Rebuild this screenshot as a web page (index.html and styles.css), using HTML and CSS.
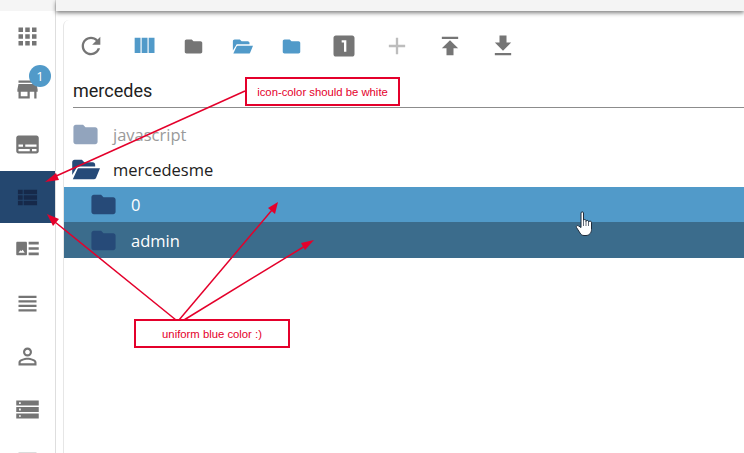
FILE: index.html
```html
<!DOCTYPE html>
<html lang="en">
<head>
    <meta charset="UTF-8">
    <meta name="viewport" content="width=device-width, initial-scale=1.0">
    <title>File browser</title>
    <link rel="stylesheet" href="styles.css">
</head>
<body>
    <svg class="icon-defs" width="0" height="0">
        <symbol id="i-apps" viewBox="0 0 24 24"><path d="M4 8h4V4H4v4zm6 12h4v-4h-4v4zm-6 0h4v-4H4v4zm0-6h4v-4H4v4zm6 0h4v-4h-4v4zm6-10v4h4V4h-4zm-6 4h4V4h-4v4zm6 6h4v-4h-4v4zm0 6h4v-4h-4v4z"/></symbol>
        <symbol id="i-store" viewBox="0 0 24 24"><path d="M20 4H4v2h16V4zm1 10v-2l-1-5H4l-1 5v2h1v6h10v-6h4v6h2v-6h1zm-9 4H6v-4h6v4z"/></symbol>
        <symbol id="i-subtitles" viewBox="0 0 24 24"><path d="M20 4H4c-1.100 0-2 .9-2 2v12c0 1.100.9 2 2 2h16c1.100 0 2-.9 2-2V6c0-1.100-.9-2-2-2zM4 12h4v2H4v-2zm10 6H4v-2h10v2zm6 0h-4v-2h4v2zm0-4H10v-2h10v2z"/></symbol>
        <symbol id="i-table" viewBox="0 0 24 24"><path d="M2 4h5v4.600H2zM8 4h14v4.600H8zM2 9.700h5v4.600H2zM8 9.700h14v4.600H8zM2 15.400h5V20H2zM8 15.400h14V20H8z"/></symbol>
        <symbol id="i-imagelist" viewBox="0 0 24 24"><path fill-rule="evenodd" d="M3 6h7.500c.6 0 1 .4 1 1v10c0 .6-.4 1-1 1H3c-.6 0-1-.4-1-1V7c0-.6.4-1 1-1zm1 9.800h5.500l-1.800-2.800-1.200 1.500-.9-1z"/><path d="M13 6h9v2.400h-9zM13 10.800h9v2.400h-9zM13 15.600h9V18h-9z"/></symbol>
        <symbol id="i-headline" viewBox="0 0 24 24"><path d="M4 15h16v-2H4v2zm0 4h16v-2H4v2zm0-8h16V9H4v2zm0-6v2h16V5H4z"/></symbol>
        <symbol id="i-person" viewBox="0 0 24 24"><path d="M12 5.900c1.160 0 2.100.94 2.100 2.100s-.94 2.100-2.100 2.100S9.900 9.160 9.900 8s.94-2.100 2.100-2.100m0 9c2.970 0 6.100 1.460 6.100 2.100v1.100H5.900V17c0-.64 3.130-2.100 6.100-2.100M12 4C9.790 4 8 5.790 8 8s1.790 4 4 4 4-1.790 4-4-1.790-4-4-4zm0 9c-2.670 0-8 1.340-8 4v3h16v-3c0-2.660-5.330-4-8-4z"/></symbol>
        <symbol id="i-rows" viewBox="0 0 24 24"><path fill-rule="evenodd" d="M2 4h20v4.500H2zm2.500 1.500v1.500H6V5.500zM2 9.800h20v4.400H2zm2.500 1.400v1.600H6v-1.600zM2 15.500h20V20H2zm2.500 1.500v1.500H6V17z"/></symbol>
        <symbol id="i-refresh" viewBox="0 0 24 24"><path d="M17.650 6.350C16.200 4.900 14.210 4 12 4c-4.420 0-7.990 3.580-7.990 8s3.570 8 7.990 8c3.730 0 6.840-2.550 7.730-6h-2.080c-.82 2.330-3.040 4-5.650 4-3.310 0-6-2.690-6-6s2.690-6 6-6c1.660 0 3.140.69 4.220 1.780L13 11h7V4l-2.350 2.350z"/></symbol>
        <symbol id="i-columns" viewBox="0 0 24 24"><path d="M10 18h5V5h-5v13zm-6 0h5V5H4v13zM16 5v13h5V5h-5z"/></symbol>
        <symbol id="i-folder" viewBox="0 0 24 24"><path d="M10 4H4c-1.100 0-1.990.9-1.990 2L2 18c0 1.100.9 2 2 2h16c1.100 0 2-.9 2-2V8c0-1.100-.9-2-2-2h-8l-2-2z"/></symbol>
        <symbol id="i-folder-open" viewBox="0 0 24 24"><path d="M1 16.500V6c0-1.100.9-2 2-2h6l2 2h7c1.100 0 2 .9 2 2v1.500H6.500c-1 0-1.800.6-2.100 1.500L1 16.500zM6.500 11H24l-3.300 8c-.3.6-.8 1-1.500 1H1.500l3.700-8c.3-.6.700-1 1.300-1z"/></symbol>
        <symbol id="i-one" viewBox="0 0 24 24"><path d="M19 3H5c-1.100 0-2 .9-2 2v14c0 1.100.9 2 2 2h14c1.100 0 2-.9 2-2V5c0-1.100-.9-2-2-2zm-5 14h-2V9h-2V7h4v10z"/></symbol>
        <symbol id="i-add" viewBox="0 0 24 24"><path d="M19 13h-6v6h-2v-6H5v-2h6V5h2v6h6v2z"/></symbol>
        <symbol id="i-upload" viewBox="0 0 24 24"><path d="M5 4v2h14V4H5zm0 10h4v6h6v-6h4l-7-7-7 7z"/></symbol>
        <symbol id="i-download" viewBox="0 0 24 24"><path d="M19 9h-4V3H9v6H5l7 7 7-7zM5 18v2h14v-2H5z"/></symbol>
    </svg>

    <div class="layout">
        <aside class="sidebar">
            <div class="side-top"></div>
            <a class="side-item side-first"><svg class="side-icon"><use href="#i-apps"/></svg></a>
            <a class="side-item side-up">
                <svg class="side-icon"><use href="#i-store"/></svg>
                <span class="badge">1</span>
            </a>
            <a class="side-item"><svg class="side-icon"><use href="#i-subtitles"/></svg></a>
            <a class="side-item active"><svg class="side-icon"><use href="#i-table"/></svg></a>
            <a class="side-item side-up"><svg class="side-icon"><use href="#i-imagelist"/></svg></a>
            <a class="side-item"><svg class="side-icon"><use href="#i-headline"/></svg></a>
            <a class="side-item"><svg class="side-icon"><use href="#i-person"/></svg></a>
            <a class="side-item"><svg class="side-icon"><use href="#i-rows"/></svg></a>
            <a class="side-item side-up"><svg class="side-icon"><use href="#i-headline"/></svg></a>
        </aside>

        <div class="page">
            <header class="topbar"></header>
            <main class="panel">
                <div class="toolbar">
                    <svg class="tool"><use href="#i-refresh"/></svg>
                    <svg class="tool tool-blue"><use href="#i-columns"/></svg>
                    <div class="tool-folders">
                        <svg class="tool-folder"><use href="#i-folder"/></svg>
                        <svg class="tool-folder tool-blue"><use href="#i-folder-open"/></svg>
                        <svg class="tool-folder tool-blue"><use href="#i-folder"/></svg>
                    </div>
                    <svg class="tool"><use href="#i-one"/></svg>
                    <svg class="tool tool-off"><use href="#i-add"/></svg>
                    <svg class="tool"><use href="#i-upload"/></svg>
                    <svg class="tool"><use href="#i-download"/></svg>
                </div>

                <h2 class="path-title">mercedes</h2>

                <ul class="tree">
                    <li class="tree-row faded">
                        <svg class="tree-icon"><use href="#i-folder"/></svg>javascript
                    </li>
                    <li class="tree-row">
                        <svg class="tree-icon"><use href="#i-folder-open"/></svg>mercedesme
                    </li>
                    <li class="tree-row child hover">
                        <svg class="tree-icon"><use href="#i-folder"/></svg>0
                    </li>
                    <li class="tree-row child selected">
                        <svg class="tree-icon"><use href="#i-folder"/></svg>admin
                    </li>
                </ul>
            </main>
        </div>
    </div>

    <!-- annotations drawn on top of the screenshot -->
    <svg class="arrows" width="744" height="453">
        <g class="arrow-lines">
            <line x1="245" y1="91" x2="54" y2="177"/>
            <line x1="176" y1="320" x2="55" y2="222"/>
            <line x1="179" y1="320" x2="272" y2="210"/>
            <line x1="184" y1="320" x2="305" y2="246"/>
        </g>
        <g class="arrow-heads">
            <polygon points="45,182 56,173 59,180"/>
            <polygon points="47,214 59,219 53,226"/>
            <polygon points="278,202 275,214 268,208"/>
            <polygon points="314,240 305,250 301,243"/>
        </g>
    </svg>
    <div class="note note-icon">icon-color should be white</div>
    <div class="note note-blue">uniform blue color :)</div>

    <svg class="hand-cursor" width="19" height="26" viewBox="0 0 19 26">
        <path d="M6 2c0-1.500 2.500-1.500 2.500 0v7.500c0-1.300 2.500-1.300 2.500 0v.8c0-1.200 2.500-1.200 2.500 0v.7c0-1.100 3-1.100 3 .2v7.300c0 3-2 6-5.500 6H9c-2 0-3-1-4-2.500l-3.500-5.500c-.8-1.300 1-2.700 2.200-1.500L6 16.500z"/>
        <path class="hand-lines" d="M8.500 10v5M11 10v5M13.500 11v4"/>
    </svg>
</body>
</html>
```

FILE: styles.css
```css
/* General Page Styling */
html, body {
    height: 100%;
}

body {
    font-family: "Open Sans", Arial, sans-serif;
    background: white;
    color: #212121;
    margin: 0;
    padding: 0;
    overflow: hidden;
    position: relative;
}

.icon-defs {
    position: absolute;
}

.layout {
    display: flex;
    height: 453px;
}

/* Sidebar */
.sidebar {
    width: 55px;
    flex-shrink: 0;
    border-right: 1px solid #dedede;
    overflow: hidden;
}

.side-top {
    height: 11px;
    margin-bottom: 1px;
    background: #f5f5f5;
}

.side-item {
    display: flex;
    align-items: center;
    justify-content: center;
    box-sizing: border-box;
    height: 53px;
    position: relative;
}

.side-first {
    height: 49px;
    margin-bottom: 4px;
}

.side-up {
    padding-bottom: 4px;
}

.side-icon {
    width: 27px;
    height: 27px;
    fill: #757575;
    flex-shrink: 0;
}

.side-item.active {
    background: #24476f;
    height: 52px;
    margin-bottom: 1px;
}

.side-item.active .side-icon {
    width: 23px;
    height: 23px;
    fill: #16294a;
}

.badge {
    position: absolute;
    top: 0;
    left: 29px;
    width: 22px;
    height: 22px;
    border-radius: 50%;
    background: #519ac9;
    color: white;
    font-size: 13px;
    line-height: 22px;
    text-align: center;
}

/* Main area */
.page {
    flex: 1;
    min-width: 0;
    display: flex;
    flex-direction: column;
}

.topbar {
    height: 11px;
    flex-shrink: 0;
    background: #f4f4f4;
    box-shadow: 0 2px 4px rgba(0, 0, 0, 0.5);
}

.panel {
    flex: 1;
    margin: 9px 0 0 7px;
    border-left: 1px solid #e6e6e6;
    border-top-left-radius: 6px;
}

/* Toolbar */
.toolbar {
    display: flex;
    align-items: center;
    gap: 25px;
    height: 32px;
    padding: 10px 0 0 13px;
}

.tool {
    width: 28px;
    height: 28px;
    fill: #757575;
}

.tool-folders {
    display: flex;
    align-items: center;
    gap: 28px;
    margin: 0 3px 0 0;
}

.tool-folder {
    width: 21px;
    height: 21px;
    fill: #757575;
}

.toolbar .tool-blue {
    fill: #519ac9;
}

.toolbar .tool-off {
    fill: #bdbdbd;
}

.path-title {
    font-family: Roboto, Arial, sans-serif;
    font-size: 18px;
    font-weight: 400;
    line-height: 24px;
    margin: 17px 0 0 9px;
    padding-bottom: 4px;
    border-bottom: 1px solid #8c8c8c;
    color: #212121;
}

/* Folder tree */
.tree {
    list-style: none;
    margin: 9px 0 0 0;
    padding: 0;
}

.tree-row {
    display: flex;
    align-items: center;
    height: 35px;
    padding-left: 7px;
    font-size: 16.5px;
    color: #212121;
}

.tree-icon {
    width: 29px;
    height: 29px;
    margin-right: 13px;
    fill: #264a78;
    flex-shrink: 0;
}

.tree-row.faded {
    color: #9a9a9a;
}

.tree-row.faded .tree-icon {
    fill: #92a4bd;
}

.tree-row.child {
    padding-left: 25px;
    color: white;
}

.tree-row.hover {
    background: #519ac9;
}

.tree-row.selected {
    background: #3b6c8c;
    height: 36px;
}

/* Annotations */
.arrows {
    position: absolute;
    top: 0;
    left: 0;
}

.arrow-lines line {
    stroke: #e4002b;
    stroke-width: 1.5;
}

.arrow-heads polygon {
    fill: #e4002b;
}

.note {
    position: absolute;
    box-sizing: border-box;
    border: 2px solid #e4002b;
    background: white;
    color: #e4002b;
    font-family: "Liberation Sans", Arial, sans-serif;
    font-size: 11.3px;
    display: flex;
    align-items: center;
    justify-content: center;
}

.note-icon {
    left: 245px;
    top: 77px;
    width: 155px;
    height: 29px;
}

.note-blue {
    left: 134px;
    top: 319px;
    width: 156px;
    height: 29px;
}

.hand-cursor {
    position: absolute;
    left: 575px;
    top: 211px;
    fill: white;
    stroke: #1f2d3d;
    stroke-width: 1;
}

.hand-lines {
    fill: none;
    stroke-width: 0.7;
}
```
